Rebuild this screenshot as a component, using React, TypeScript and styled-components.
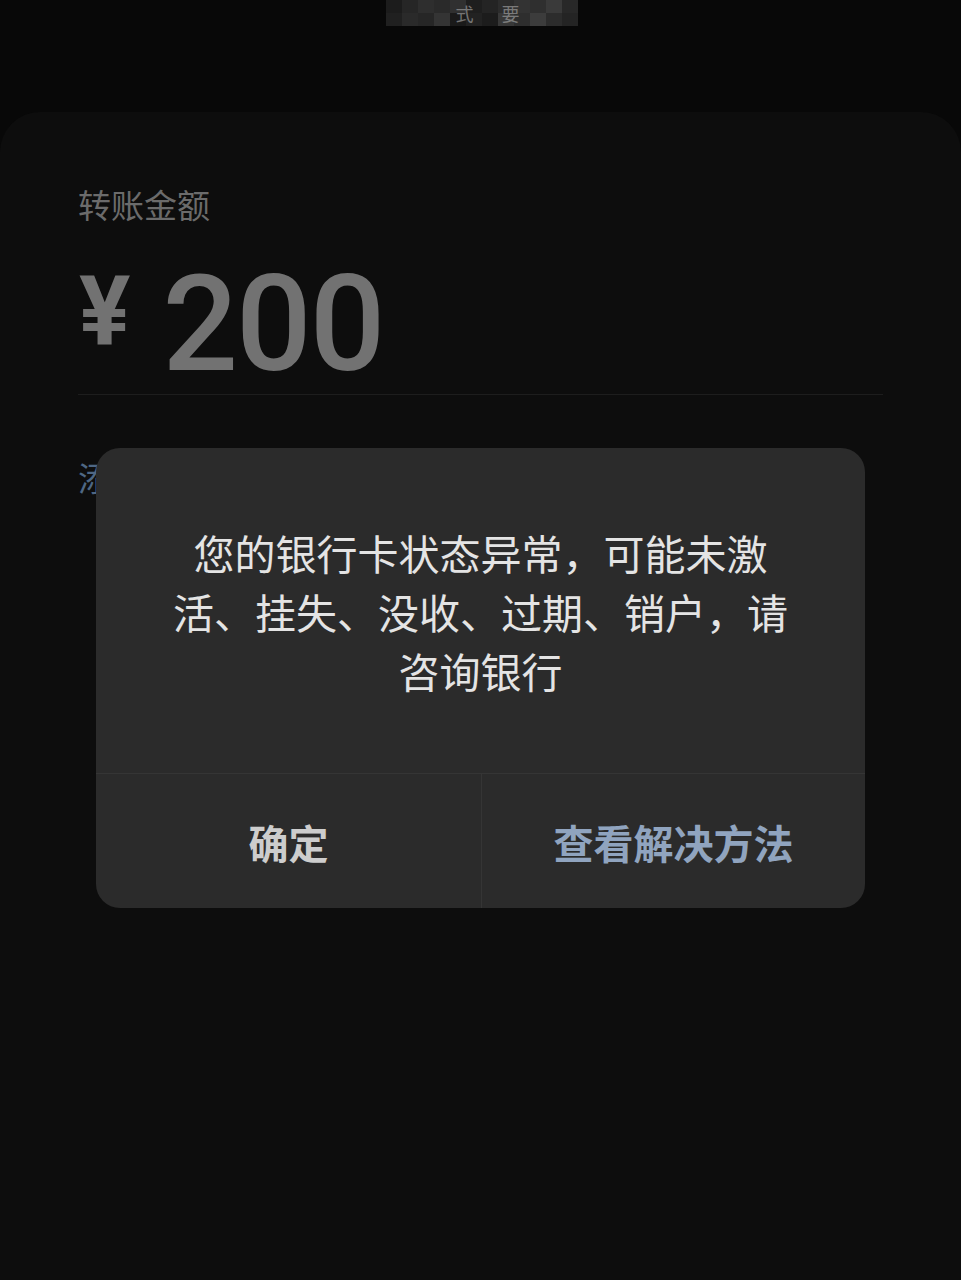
import React from "react";
import styled, { createGlobalStyle } from "styled-components";

const Global = createGlobalStyle`
  html, body { margin: 0; padding: 0; background: #080808; }
  * { box-sizing: border-box; }
`;

const Page = styled.div`
  position: relative;
  width: 961px;
  height: 1280px;
  overflow: hidden;
  background: #080808;
  display: flex;
  flex-direction: column;
  font-family: "Noto Sans CJK SC", "Noto Sans", sans-serif;
`;

const TopBar = styled.div`
  height: 112px;
  display: flex;
  justify-content: center;
  padding-left: 2px;
`;

const Mosaic = styled.div`
  position: relative;
  width: 192px;
  height: 26px;
  display: grid;
  grid-template-columns: repeat(12, 1fr);
  grid-template-rows: repeat(2, 1fr);
`;

const Tile = styled.div<{ $c: string }>`
  background: ${(p) => p.$c};
`;

const MosaicText = styled.span`
  position: absolute;
  left: 70px;
  top: 2px;
  font-size: 18px;
  line-height: 22px;
  word-spacing: 24px;
  color: #9a9a9a;
  opacity: 0.7;
`;

const Card = styled.div`
  flex: 1;
  background: #0d0d0d;
  border-radius: 40px 40px 0 0;
  padding: 70px 78px 0 78px;
  display: flex;
  flex-direction: column;
`;

const Label = styled.div`
  font-size: 33px;
  line-height: 44px;
  color: #6b6b6b;
`;

const AmountRow = styled.div`
  display: flex;
  align-items: flex-start;
  gap: 32px;
  margin-top: 38px;
  height: 126px;
  font-family: Roboto, "Liberation Sans", sans-serif;
  color: #727272;
`;

const Yen = styled.span`
  font-size: 96px;
  line-height: 96px;
  font-weight: 700;
  margin-top: -1px;
  padding-left: 1px;
`;

const Amount = styled.span`
  font-size: 133px;
  font-weight: 500;
  letter-spacing: -2px;
  line-height: 126px;
  margin-top: -2px;
`;

const Divider = styled.div`
  height: 1px;
  background: #1d1d1d;
  margin-top: 4px;
`;

const Note = styled.div`
  margin-top: 58px;
  font-size: 33px;
  color: #4e6784;
`;

const Dialog = styled.div`
  position: absolute;
  left: 96px;
  top: 448px;
  width: 769px;
  background: #2b2b2b;
  border-radius: 24px;
  overflow: hidden;
  display: flex;
  flex-direction: column;
`;

const Message = styled.div`
  padding: 75px 60px 73px;
  text-align: center;
  font-size: 41px;
  line-height: 59px;
  color: #e4e4e4;
`;

const Actions = styled.div`
  display: grid;
  grid-template-columns: 385px 1fr;
  border-top: 1px solid #353535;
  height: 135px;
`;

const Action = styled.div<{ $primary?: boolean }>`
  display: flex;
  align-items: center;
  justify-content: center;
  font-size: 40px;
  font-weight: 700;
  color: ${(p) => (p.$primary ? "#90a4bf" : "#cdcdcd")};
  border-left: ${(p) => (p.$primary ? "1px solid #353535" : "none")};
  padding-top: 2px;
`;

const tiles = [
  "#1c1c1c", "#262626", "#2e2e2e", "#2a2a2a", "#303030", "#1e1e1e", "#242424", "#2c2c2c", "#333333", "#2f2f2f", "#3a3a3a", "#282828",
  "#202020", "#2a2a2a", "#262626", "#343434", "#1a1a1a", "#222222", "#1c1c1c", "#383838", "#2e2e2e", "#3c3c3c", "#2c2c2c", "#242424",
];

export default function App() {
  return (
    <>
      <Global />
      <Page>
        <TopBar>
          <Mosaic>
            {tiles.map((c, i) => (
              <Tile key={i} $c={c} />
            ))}
            <MosaicText>式 要</MosaicText>
          </Mosaic>
        </TopBar>
        <Card>
          <Label>转账金额</Label>
          <AmountRow>
            <Yen>¥</Yen>
            <Amount>200</Amount>
          </AmountRow>
          <Divider />
          <Note>添加转账说明</Note>
        </Card>
        <Dialog>
          <Message>
            您的银行卡状态异常，可能未激活、挂失、没收、过期、销户，请咨询银行
          </Message>
          <Actions>
            <Action>确定</Action>
            <Action $primary>查看解决方法</Action>
          </Actions>
        </Dialog>
      </Page>
    </>
  );
}
